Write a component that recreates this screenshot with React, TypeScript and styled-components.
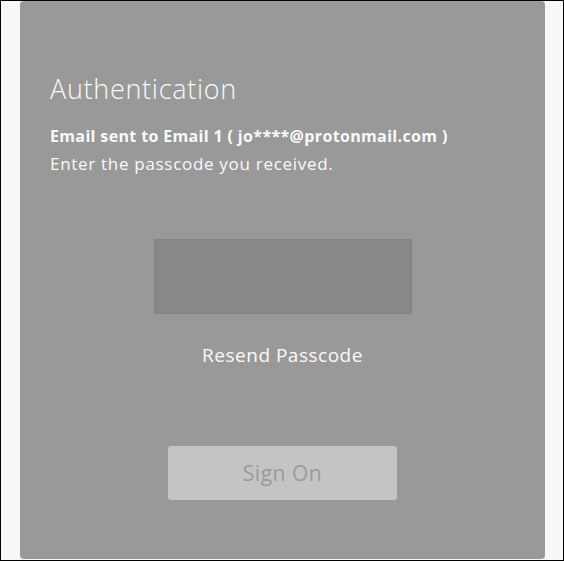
import React, { FC } from 'react';
import styled, { createGlobalStyle } from 'styled-components';

const GlobalStyle = createGlobalStyle`
  html, body {
    margin: 0;
    padding: 0;
  }
  body {
    font-family: 'Open Sans', Lato, sans-serif;
  }
`;

const App: FC = () => {
  return (
    <Frame>
      <GlobalStyle />
      <Card>
        <Title>Authentication</Title>
        <SentTo>Email sent to Email 1 ( jo****@protonmail.com )</SentTo>
        <Hint>Enter the passcode you received.</Hint>
        <Form>
          <PasscodeInput type="text" aria-label="Passcode" />
          <Resend>Resend Passcode</Resend>
          <SignOn disabled>Sign On</SignOn>
        </Form>
      </Card>
    </Frame>
  );
};

const Frame = styled.div`
  box-sizing: border-box;
  width: 564px;
  height: 561px;
  border: 1px solid #000;
  background-color: #f8f8f8;
  padding: 0 18px 1px 19px;
  display: flex;
`;

const Card = styled.div`
  box-sizing: border-box;
  flex: 1;
  background-color: #999999;
  border-radius: 4px;
  padding: 71px 30px 0;
  display: flex;
  flex-direction: column;
  color: #fafafa;
`;

const Title = styled.h1`
  margin: 0 0 17px;
  font-size: 27px;
  font-weight: 300;
  line-height: 34px;
  letter-spacing: 0.7px;
`;

const SentTo = styled.div`
  font-size: 16px;
  font-weight: 700;
  line-height: 26px;
  letter-spacing: 0.35px;
`;

const Hint = styled.div`
  margin-top: 2px;
  font-size: 17px;
  font-weight: 400;
  line-height: 26px;
  letter-spacing: 0.7px;
`;

const Form = styled.div`
  display: flex;
  flex-direction: column;
  align-items: center;
  padding-top: 62px;
`;

const PasscodeInput = styled.input`
  box-sizing: border-box;
  width: 258px;
  height: 75px;
  margin: 0;
  border: 1px solid #838383;
  background-color: #888888;
  outline: none;
`;

const Resend = styled.div`
  margin-top: 28px;
  font-size: 19px;
  line-height: 26px;
  letter-spacing: 0.5px;
  color: #fafafa;
`;

const SignOn = styled.button`
  box-sizing: border-box;
  margin-top: 78px;
  width: 229px;
  height: 54px;
  border: none;
  border-radius: 3px;
  background-color: #c4c4c4;
  color: #9a9a9a;
  font-family: 'Open Sans', Lato, sans-serif;
  font-size: 21px;
  font-weight: 400;
  letter-spacing: 0.5px;
`;

export default App;
